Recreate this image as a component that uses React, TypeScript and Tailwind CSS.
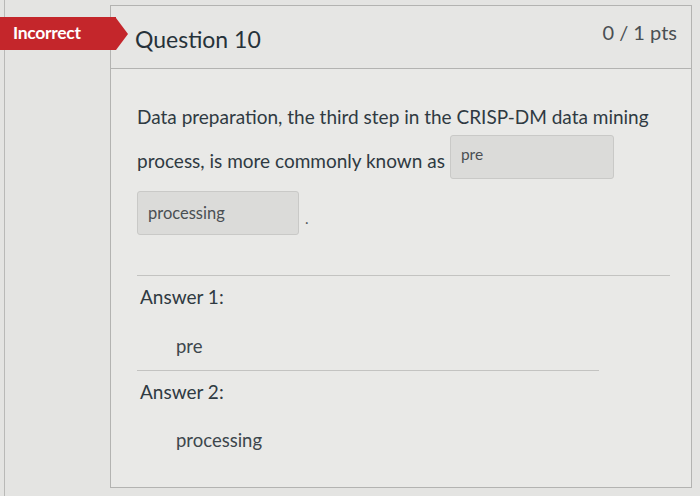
export default function App() {
  return (
    <div className="relative w-[700px] h-[496px] overflow-hidden bg-[#e4e4e2] font-['Lato','Noto_Sans',sans-serif] text-[#2f3a42]">
      {/* left page edge */}
      <div className="absolute left-[4px] top-0 h-full w-px bg-[#b9b9b7]" />

      {/* status badge */}
      <div className="absolute left-0 top-[17px] flex h-[33px] items-center">
        <div className="flex h-full w-[116px] items-center bg-[#c4262b] pl-[13px] text-[17.5px] font-bold tracking-[-0.3px] text-white">
          Incorrect
        </div>
        <div className="h-0 w-0 border-y-[16.5px] border-l-[12px] border-y-transparent border-l-[#c4262b]" />
      </div>

      <div className="ml-[110px] mt-[5px] flex h-[483px] w-[582px] flex-col border border-[#b3b3b1] bg-[#e9e9e7]">
        {/* header */}
        <div className="flex h-[63px] items-center justify-between border-b border-[#b3b3b1] bg-[#e6e6e4] pl-[24px] pr-[14px]">
          <div className="mt-[4px] text-[23px] text-[#26323a]">Question 10</div>
          <div className="-mt-[10px] text-[20px] text-[#4a4f53]">0 / 1 pts</div>
        </div>

        {/* question body */}
        <div className="pl-[26px] pr-[22px] pt-[30px] text-[19px]">
          <div className="h-[36px] leading-[36px]">
            Data preparation, the third step in the CRISP-DM data mining
          </div>
          <div className="flex h-[44px] items-start">
            <span className="pt-[15px] leading-[22px]">process, is more commonly known as</span>
            <div className="ml-[5px] h-[44px] w-[164px] rounded-[3px] border border-[#c9c9c7] bg-[#dbdbd9] pl-[10px] pt-[9px] text-[15.5px] leading-[18px] text-[#4a4f53]">
              pre
            </div>
          </div>
          <div className="mt-[12px] flex items-end">
            <div className="h-[44px] w-[162px] rounded-[3px] border border-[#c9c9c7] bg-[#dbdbd9] pl-[10px] pt-[11px] text-[16.5px] leading-[20px] text-[#4a4f53]">
              processing
            </div>
            <span className="mb-[7px] ml-[6px] text-[15px] leading-[20px] text-[#55595c]">.</span>
          </div>

          <div className="mt-[40px] h-px w-[533px] bg-[#c3c3c1]" />

          <div className="ml-[3px] mt-[9px] text-[19px] leading-[24px]">Answer 1:</div>
          <div className="ml-[39px] mt-[25px] text-[18.5px] leading-[24px] text-[#3d464c]">pre</div>
          <div className="mt-[12px] h-px w-[462px] bg-[#c3c3c1]" />

          <div className="ml-[3px] mt-[9px] text-[19px] leading-[24px]">Answer 2:</div>
          <div className="ml-[39px] mt-[24px] text-[18.5px] leading-[24px] text-[#3d464c]">processing</div>
        </div>
      </div>
    </div>
  );
}
